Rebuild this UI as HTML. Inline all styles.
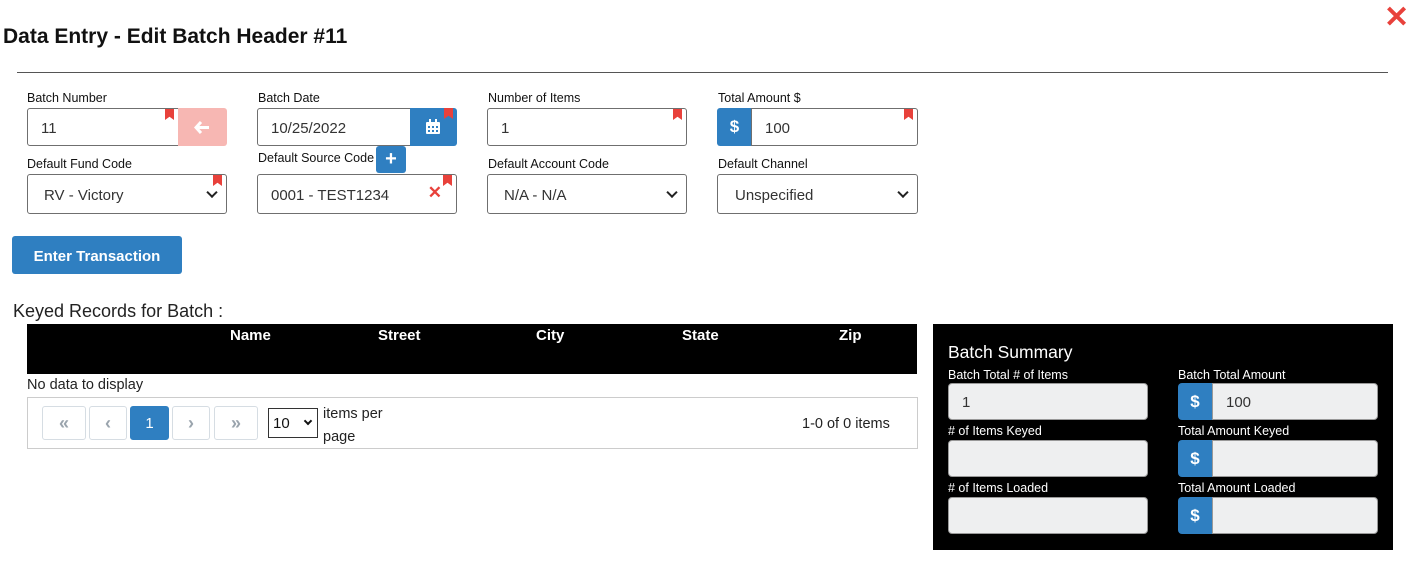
<!DOCTYPE html>
<html><head><style>
*{box-sizing:border-box;margin:0;padding:0}
body{width:1410px;height:561px;background:#fff;font-family:"Liberation Sans",sans-serif;color:#222;position:relative;overflow:hidden}
.a{position:absolute}
.lbl{position:absolute;font-size:12.5px;color:#111}
.inp{position:absolute;border:1px solid #6f6f6f;border-radius:3px;background:#fff;font-size:15px;color:#333;padding-left:13px;padding-top:2px;display:flex;align-items:center}
.flag{position:absolute;top:0;width:9px;height:11px;background:#e8413b;clip-path:polygon(0 0,100% 0,100% 100%,50% 70%,0 100%)}
.blue{background:#2f7fc1;color:#fff}
.sel::after{content:"";position:absolute;right:10px;top:50%;width:6px;height:6px;border-right:2px solid #222;border-bottom:2px solid #222;transform:translateY(-70%) rotate(45deg)}
.th{position:absolute;top:327px;color:#fff;font-weight:bold;font-size:15px}
.pb{position:absolute;top:406px;height:34px;border:1px solid #d6dde3;border-radius:3px;color:#9aa4ad;font-weight:bold;display:flex;align-items:center;justify-content:center;font-size:18px}
.sl{position:absolute;color:#fff;font-size:12.5px}
.si{position:absolute;height:37px;background:#eeeff0;border:1px solid #999;border-radius:4px;font-size:15px;color:#333;display:flex;align-items:center;padding-left:13px;padding-top:2px}
.dol{position:absolute;width:34px;height:37px;border-radius:4px 0 0 4px;background:#2f7fc1;color:#fff;font-weight:bold;font-size:17px;display:flex;align-items:center;justify-content:center}
</style></head><body>
<div class="a" style="left:3px;top:25px;font-size:21px;font-weight:bold;color:#111">Data Entry - Edit Batch Header #11</div>
<div class="a" style="left:1384px;top:3px;font-size:30px;font-weight:bold;color:#e8413b;line-height:30px">✕</div>
<div class="a" style="left:17px;top:72px;width:1371px;height:1px;background:#555"></div>

<div class="lbl" style="left:27px;top:91px">Batch Number</div>
<div class="inp" style="left:27px;top:108px;width:152px;height:38px;border-radius:3px 0 0 3px">11<div class="flag" style="right:4px"></div></div>
<div class="a" style="left:178px;top:108px;width:49px;height:38px;background:#f7b7b3;border-radius:0 3px 3px 0"><svg class="a" style="left:16px;top:13px" width="16" height="13" viewBox="0 0 16 13"><path d="M7 1L2 6.5 7 12M2.5 6.5H15" stroke="#fff" stroke-width="3" fill="none"/></svg></div>

<div class="lbl" style="left:258px;top:91px">Batch Date</div>
<div class="inp" style="left:257px;top:108px;width:154px;height:38px;border-radius:3px 0 0 3px">10/25/2022</div>
<div class="a blue" style="left:410px;top:108px;width:47px;height:38px;border-radius:0 3px 3px 0"><svg class="a" style="left:16px;top:11px" width="14" height="15" viewBox="0 0 14 15"><rect x="0" y="3" width="14" height="12" rx="1" fill="#fff"/><rect x="3" y="0" width="2" height="4" fill="#fff"/><rect x="9" y="0" width="2" height="4" fill="#fff"/><g fill="#2f7fc1"><rect x="2" y="7" width="2" height="2"/><rect x="6" y="7" width="2" height="2"/><rect x="10" y="7" width="2" height="2"/><rect x="2" y="11" width="2" height="2"/><rect x="6" y="11" width="2" height="2"/><rect x="10" y="11" width="2" height="2"/></g></svg><div class="flag" style="right:4px"></div></div>

<div class="lbl" style="left:488px;top:91px">Number of Items</div>
<div class="inp" style="left:487px;top:108px;width:200px;height:38px">1<div class="flag" style="right:4px"></div></div>

<div class="lbl" style="left:718px;top:91px">Total Amount $</div>
<div class="a blue" style="left:717px;top:108px;width:35px;height:38px;border-radius:3px 0 0 3px;font-weight:bold;font-size:17px;display:flex;align-items:center;justify-content:center">$</div>
<div class="inp" style="left:751px;top:108px;width:167px;height:38px;border-radius:0 3px 3px 0">100<div class="flag" style="right:4px"></div></div>

<div class="lbl" style="left:27px;top:157px">Default Fund Code</div>
<div class="inp sel" style="left:27px;top:174px;width:200px;height:40px;padding-left:16px">RV - Victory<div class="flag" style="right:4px"></div></div>

<div class="lbl" style="left:258px;top:151px">Default Source Code</div>
<div class="a blue" style="left:376px;top:146px;width:30px;height:27px;border-radius:3px;font-size:20px;font-weight:bold;display:flex;align-items:center;justify-content:center">+</div>
<div class="inp" style="left:257px;top:174px;width:200px;height:40px">0001 - TEST1234<span class="a" style="right:14px;top:8px;color:#e8413b;font-weight:bold;font-size:17px">✕</span><div class="flag" style="right:4px"></div></div>

<div class="lbl" style="left:488px;top:157px">Default Account Code</div>
<div class="inp sel" style="left:487px;top:174px;width:200px;height:40px;padding-left:16px">N/A - N/A</div>

<div class="lbl" style="left:718px;top:157px">Default Channel</div>
<div class="inp sel" style="left:717px;top:174px;width:201px;height:40px;padding-left:17px">Unspecified</div>

<div class="a blue" style="left:12px;top:236px;width:170px;height:38px;border-radius:3px;font-weight:bold;font-size:15px;display:flex;align-items:center;justify-content:center;padding-top:2px">Enter Transaction</div>

<div class="a" style="left:13px;top:301px;font-size:18px;color:#222">Keyed Records for Batch :</div>
<div class="a" style="left:27px;top:324px;width:890px;height:50px;background:#000"></div>
<div class="th" style="left:230px">Name</div>
<div class="th" style="left:378px">Street</div>
<div class="th" style="left:536px">City</div>
<div class="th" style="left:682px">State</div>
<div class="th" style="left:839px">Zip</div>
<div class="a" style="left:27px;top:377px;font-size:14.5px;color:#222">No data to display</div>
<div class="a" style="left:27px;top:397px;width:891px;height:52px;border:1px solid #ccc"></div>
<div class="pb" style="left:42px;width:44px">«</div>
<div class="pb" style="left:89px;width:38px">‹</div>
<div class="pb" style="left:130px;width:39px;background:#2f7fc1;border-color:#2f7fc1;color:#fff;font-weight:normal;font-size:15px">1</div>
<div class="pb" style="left:172px;width:38px">›</div>
<div class="pb" style="left:214px;width:44px">»</div>
<div class="a" style="left:268px;top:408px;width:50px;height:30px;border:1px solid #333;font-size:15px;padding:6px 0 0 4px;color:#111">10</div>
<div class="a" style="left:305px;top:418px;width:6px;height:6px;border-right:2px solid #111;border-bottom:2px solid #111;transform:rotate(45deg)"></div>
<div class="a" style="left:323px;top:403px;font-size:14.5px;line-height:23px;color:#222">items per<br>page</div>
<div class="a" style="left:802px;top:416px;font-size:14.5px;color:#222">1-0 of 0 items</div>

<div class="a" style="left:933px;top:324px;width:460px;height:226px;background:#000"></div>
<div class="a" style="left:948px;top:342px;font-size:17.5px;color:#fff">Batch Summary</div>
<div class="sl" style="left:948px;top:368px">Batch Total # of Items</div>
<div class="sl" style="left:1178px;top:368px">Batch Total Amount</div>
<div class="si" style="left:948px;top:383px;width:200px">1</div>
<div class="dol" style="left:1178px;top:383px">$</div>
<div class="si" style="left:1212px;top:383px;width:166px;border-radius:0 4px 4px 0">100</div>
<div class="sl" style="left:948px;top:424px"># of Items Keyed</div>
<div class="sl" style="left:1178px;top:424px">Total Amount Keyed</div>
<div class="si" style="left:948px;top:440px;width:200px"></div>
<div class="dol" style="left:1178px;top:440px">$</div>
<div class="si" style="left:1212px;top:440px;width:166px;border-radius:0 4px 4px 0"></div>
<div class="sl" style="left:948px;top:481px"># of Items Loaded</div>
<div class="sl" style="left:1178px;top:481px">Total Amount Loaded</div>
<div class="si" style="left:948px;top:497px;width:200px"></div>
<div class="dol" style="left:1178px;top:497px">$</div>
<div class="si" style="left:1212px;top:497px;width:166px;border-radius:0 4px 4px 0"></div>
</body></html>
